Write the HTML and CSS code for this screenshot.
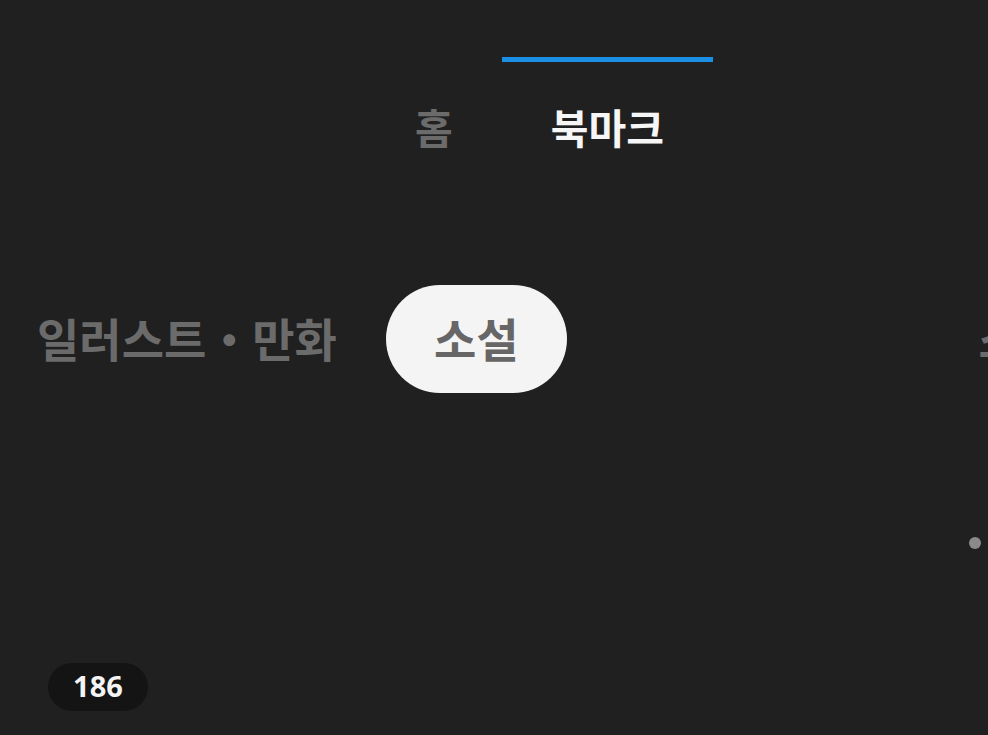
FILE: index.html
```html
<!DOCTYPE html>
<html lang="ko">
<head>
  <meta charset="UTF-8">
  <title>북마크</title>
  <link rel="stylesheet" href="styles.css">
</head>
<body>

  <div class="tabbar">
    <div class="tab">홈</div>
    <div class="tab active">북마크</div>
  </div>

  <div class="chips">
    <div class="chip">일러스트・만화</div>
    <div class="chip active">소설</div>
    <div class="chip far">소설</div>
  </div>

  <div class="pager-dot"></div>

  <div class="counter">186</div>

</body>
</html>
```
FILE: styles.css
```css
body {
  margin: 0;
  height: 735px;
  overflow: hidden;
  position: relative;
  background-color: #202020;
  font-family: "Noto Sans CJK KR", "Noto Sans", sans-serif;
}
.tabbar {
  display: flex;
  padding-left: 366px;
  padding-top: 57px;
}
.tab {
  padding: 0 49px;
  border-top: 5px solid transparent;
  color: #6b6b6b;
  font-size: 41px;
  font-weight: bold;
  line-height: 41px;
  padding-top: 44px;
}
.tab.active {
  color: #f6f6f6;
  border-top-color: #1a8fe3;
}
.chips {
  display: flex;
  align-items: center;
  margin-top: 138px;
  margin-left: -12px;
  white-space: nowrap;
}
.chip {
  padding: 0 49px;
  height: 108px;
  line-height: 104px;
  border-radius: 54px;
  color: #6b6b6b;
  font-size: 46px;
  font-weight: bold;
}
.chip.active {
  padding: 0 48px;
  background-color: #f4f4f4;
  color: #666666;
}
.chip.far {
  margin-left: 363px;
}
.pager-dot {
  position: absolute;
  left: 969px;
  top: 537px;
  width: 12px;
  height: 12px;
  border-radius: 50%;
  background-color: #8a8a8a;
}
.counter {
  position: absolute;
  left: 48px;
  top: 663px;
  width: 100px;
  height: 48px;
  border-radius: 24px;
  background-color: #141414;
  color: #f4f4f4;
  font-family: "Noto Sans", sans-serif;
  font-size: 29px;
  font-weight: bold;
  line-height: 46px;
  text-align: center;
}
```
